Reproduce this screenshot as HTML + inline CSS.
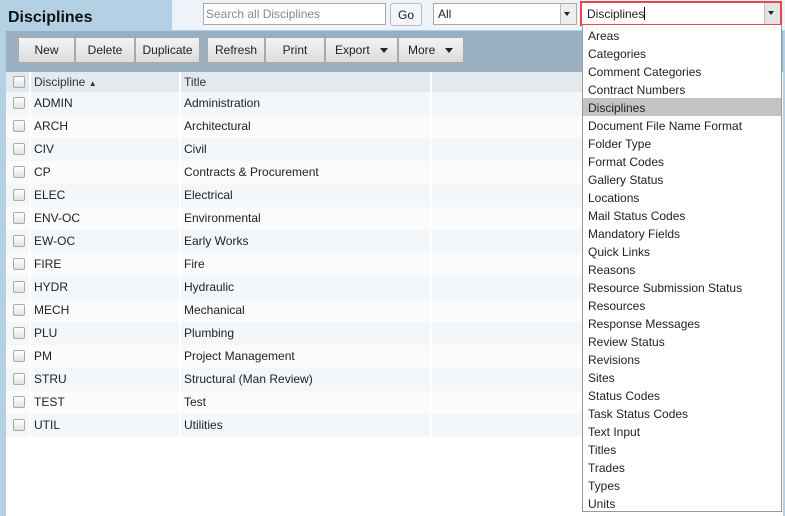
<!DOCTYPE html>
<html><head><style>
*{box-sizing:border-box;margin:0;padding:0}
body{width:785px;height:516px;overflow:hidden;background:#fff;font-family:"Liberation Sans",sans-serif;font-size:12px;color:#222;position:relative}
.abs{position:absolute}
.btn{position:absolute;top:37px;height:26px;background:linear-gradient(#f4f4f4,#dcdcdc);border:1px solid #a9a9a9;text-align:center;line-height:24px;font-size:12px;color:#222}
.tri{display:inline-block;width:0;height:0;border-left:4px solid transparent;border-right:4px solid transparent;border-top:5px solid #222;vertical-align:middle;margin-left:10px}
.row{position:absolute;left:6px;width:775px;height:23px;line-height:22px;font-size:12px;z-index:0}
.row span{position:absolute}
.cb{position:absolute;left:7px;top:5px;width:12px;height:12px;border:1px solid #aaa;border-radius:2px;background:linear-gradient(#fff,#e2e2e2)}
.dd{position:absolute;left:582px;top:25px;width:200px;height:487px;background:#fff;border:1px solid #999;border-top:none;padding-top:1px;z-index:5}
.dd div{height:18px;line-height:20px;padding-left:5px;font-size:12px;color:#222}
</style></head><body>
<div class="abs" style="left:0;top:0;width:785px;height:516px;background:#b3d0e4"></div>
<div class="abs" style="left:172px;top:0;width:613px;height:30px;background:#eef3fa"></div>
<div class="abs" style="left:8px;top:9px;font-weight:bold;font-size:16px;color:#111">Disciplines</div>
<div class="abs" style="left:6px;top:31px;width:777px;height:485px;background:#fff"></div>
<div class="abs" style="left:6px;top:31px;width:777px;height:41px;background:#9ab0c0"></div>
<div class="btn" style="left:18px;width:57px">New</div>
<div class="btn" style="left:75px;width:60px">Delete</div>
<div class="btn" style="left:135px;width:65px">Duplicate</div>
<div class="btn" style="left:207px;width:58px">Refresh</div>
<div class="btn" style="left:265px;width:60px">Print</div>
<div class="btn" style="left:325px;width:73px;text-align:left;padding-left:9px">Export<span class="tri"></span></div>
<div class="btn" style="left:398px;width:66px;text-align:left;padding-left:9px">More<span class="tri"></span></div>
<div class="abs" style="left:203px;top:3px;width:183px;height:22px;border:1px solid #aaa;background:#fff;color:#888;line-height:21px;padding-left:2px">Search all Disciplines</div>
<div class="abs" style="left:390px;top:3px;width:32px;height:23px;border:1px solid #bbb;border-radius:3px;background:#f3f6fa;text-align:center;line-height:22px">Go</div>
<div class="abs" style="left:433px;top:3px;width:144px;height:22px;border:1px solid #aaa;background:#fff;line-height:21px;padding-left:4px">All<div class="abs" style="right:0;top:0;width:16px;height:20px;background:#eee;border-left:1px solid #bbb"><span class="tri" style="margin:8px 0 0 3px;border-top-width:4px;border-left-width:3px;border-right-width:3px;vertical-align:top"></span></div></div>
<div class="abs" style="left:580px;top:1px;width:202px;height:25px;border:2px solid #e8454e;background:#fff;line-height:23px;padding-left:5px">Disciplines<span style="display:inline-block;width:1px;height:13px;background:#000;vertical-align:-2px"></span><div class="abs" style="right:0;top:0;width:16px;height:21px;background:#e4e4e4;border-left:1px solid #bbb"><span class="tri" style="margin:8px 0 0 3px;border-top-width:4px;border-left-width:3px;border-right-width:3px;vertical-align:top"></span></div></div>
<div class="row" style="top:72px;height:20px;line-height:20px;background:#e4e9ee;color:#333"><div class="cb" style="top:4px"></div><span style="left:28px">Discipline <span style="position:static;font-size:8px">▲</span></span><span style="left:178px">Title</span></div>
<div class="abs" style="left:29px;top:72px;width:2px;height:368px;background:#fff"></div>
<div class="abs" style="left:179px;top:72px;width:2px;height:368px;background:#fff"></div>
<div class="abs" style="left:430px;top:72px;width:2px;height:368px;background:#fff"></div>
<div class="dd">
<div>Areas</div><div>Categories</div><div>Comment Categories</div><div>Contract Numbers</div><div style="background:#c3c3c3">Disciplines</div><div>Document File Name Format</div><div>Folder Type</div><div>Format Codes</div><div>Gallery Status</div><div>Locations</div><div>Mail Status Codes</div><div>Mandatory Fields</div><div>Quick Links</div><div>Reasons</div><div>Resource Submission Status</div><div>Resources</div><div>Response Messages</div><div>Review Status</div><div>Revisions</div><div>Sites</div><div>Status Codes</div><div>Task Status Codes</div><div>Text Input</div><div>Titles</div><div>Trades</div><div>Types</div><div>Units</div>
</div>
<div class="row" style="top:92px;background:#f3f7fa"><div class="cb"></div><span style="left:28px">ADMIN</span><span style="left:178px">Administration</span></div>
<div class="row" style="top:115px;background:#fbfbfc"><div class="cb"></div><span style="left:28px">ARCH</span><span style="left:178px">Architectural</span></div>
<div class="row" style="top:138px;background:#f3f7fa"><div class="cb"></div><span style="left:28px">CIV</span><span style="left:178px">Civil</span></div>
<div class="row" style="top:161px;background:#fbfbfc"><div class="cb"></div><span style="left:28px">CP</span><span style="left:178px">Contracts &amp; Procurement</span></div>
<div class="row" style="top:184px;background:#f3f7fa"><div class="cb"></div><span style="left:28px">ELEC</span><span style="left:178px">Electrical</span></div>
<div class="row" style="top:207px;background:#fbfbfc"><div class="cb"></div><span style="left:28px">ENV-OC</span><span style="left:178px">Environmental</span></div>
<div class="row" style="top:230px;background:#f3f7fa"><div class="cb"></div><span style="left:28px">EW-OC</span><span style="left:178px">Early Works</span></div>
<div class="row" style="top:253px;background:#fbfbfc"><div class="cb"></div><span style="left:28px">FIRE</span><span style="left:178px">Fire</span></div>
<div class="row" style="top:276px;background:#f3f7fa"><div class="cb"></div><span style="left:28px">HYDR</span><span style="left:178px">Hydraulic</span></div>
<div class="row" style="top:299px;background:#fbfbfc"><div class="cb"></div><span style="left:28px">MECH</span><span style="left:178px">Mechanical</span></div>
<div class="row" style="top:322px;background:#f3f7fa"><div class="cb"></div><span style="left:28px">PLU</span><span style="left:178px">Plumbing</span></div>
<div class="row" style="top:345px;background:#fbfbfc"><div class="cb"></div><span style="left:28px">PM</span><span style="left:178px">Project Management</span></div>
<div class="row" style="top:368px;background:#f3f7fa"><div class="cb"></div><span style="left:28px">STRU</span><span style="left:178px">Structural (Man Review)</span></div>
<div class="row" style="top:391px;background:#fbfbfc"><div class="cb"></div><span style="left:28px">TEST</span><span style="left:178px">Test</span></div>
<div class="row" style="top:414px;background:#f3f7fa"><div class="cb"></div><span style="left:28px">UTIL</span><span style="left:178px">Utilities</span></div>
<div class="abs" style="left:29px;top:92px;width:2px;height:345px;background:#fff;z-index:1"></div>
<div class="abs" style="left:179px;top:92px;width:2px;height:345px;background:#fff;z-index:1"></div>
<div class="abs" style="left:430px;top:92px;width:2px;height:345px;background:#fff;z-index:1"></div>
</body></html>
